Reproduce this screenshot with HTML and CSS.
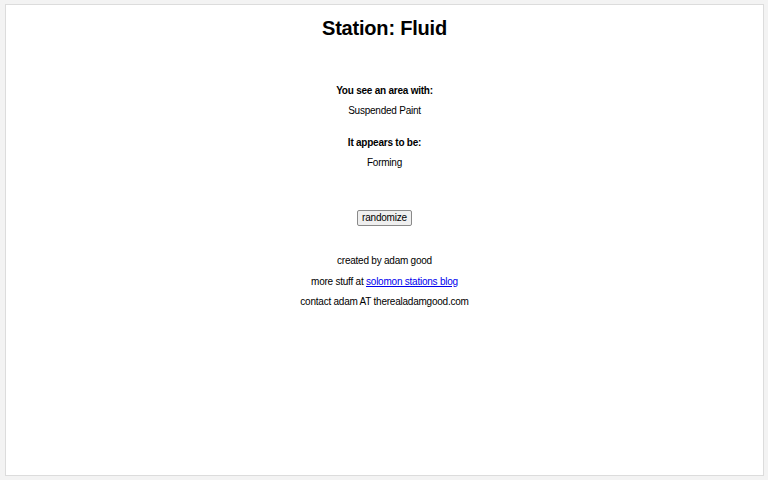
FILE: index.html
```html
<!DOCTYPE html>
<html>
<head>
<meta charset="utf-8">
<link rel="stylesheet" href="styles.css">
</head>
<body>
<div class="page">
  <h1 class="title">Station: Fluid</h1>
  <div class="info">
    <div class="line bold">You see an area with:</div>
    <div class="line">Suspended Paint</div>
    <div class="line bold gap">It appears to be:</div>
    <div class="line">Forming</div>
  </div>
  <div class="action"><button class="btn">randomize</button></div>
  <div class="footer">
    <div class="fline">created by adam good</div>
    <div class="fline">more stuff at <a href="#" class="link">solomon stations blog</a></div>
    <div class="fline">contact adam AT therealadamgood.com</div>
  </div>
</div>
</body>
</html>
```
FILE: styles.css
```css
html, body { margin: 0; padding: 0; }
body {
  background: #f3f3f3;
  font-family: "Liberation Sans", Arial, sans-serif;
  color: #000;
  padding: 4px 4px 4px 5px;
  height: 480px;
  box-sizing: border-box;
}
.page {
  background: #fff;
  border: 1px solid #dcdcdc;
  height: 472px;
  box-sizing: border-box;
  text-align: center;
}
.title {
  font-size: 20px;
  line-height: 24px;
  font-weight: bold;
  letter-spacing: -0.2px;
  margin: 11px 0 0;
}
.info { margin-top: 41px; font-size: 10px; letter-spacing: -0.23px; }
.line { line-height: 20px; }
.bold { font-weight: bold; }
.gap { margin-top: 12px; }
.action { margin-top: 37px; line-height: 0; }
.btn {
  font-family: "Liberation Sans", Arial, sans-serif;
  font-size: 10px;
  letter-spacing: -0.2px;
  line-height: 12px;
  padding: 1px 4px;
  background: #efefef;
  border: 1px solid #8a8a8a;
  border-radius: 2px;
  color: #000;
}
.footer { margin-top: 25px; font-size: 10px; letter-spacing: -0.23px; }
.fline { line-height: 20.5px; }
.link { color: #0000ee; text-decoration: underline; }
```
